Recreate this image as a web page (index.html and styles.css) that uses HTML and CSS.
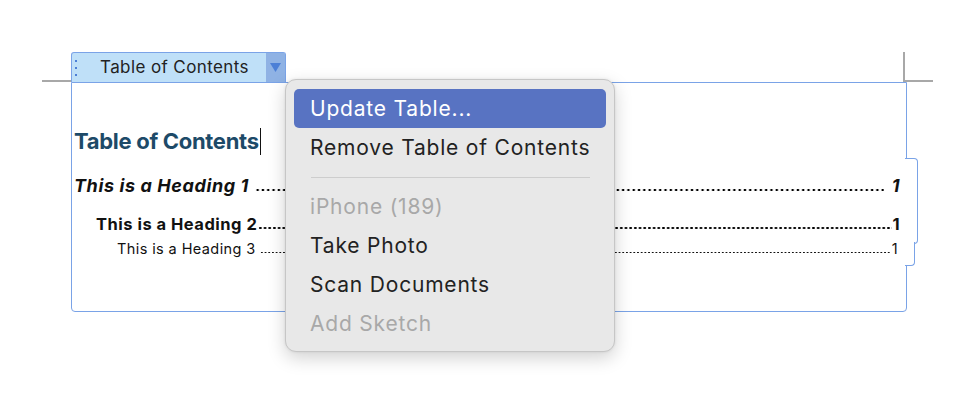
FILE: index.html
```html
<!DOCTYPE html>
<html lang="en">
<head>
    <meta charset="UTF-8">
    <meta name="viewport" content="width=device-width, initial-scale=1.0">
    <title>Table of Contents</title>
    <link rel="stylesheet" href="styles.css">
</head>
<body>
    <div class="page">
        <div class="doc">
            <div class="tab">
                <span class="grip"><i></i><i></i><i></i></span>
                <span class="tab-label">Table of Contents</span>
                <span class="tab-drop"><svg width="11" height="9" viewBox="0 0 11 9"><path d="M0 0 H11 L5.5 9 Z" fill="#4c7fd6"/></svg></span>
            </div>
            <div class="toc-box">
                <div class="bump"></div>
                <div class="bump-low"></div>
                <h2 class="toc-title">Table of Contents<span class="caret"></span></h2>
                <div class="toc-line lvl1"><span class="entry">This is a Heading 1</span><span class="leader"></span><span class="num">1</span></div>
                <div class="toc-line lvl2"><span class="entry">This is a Heading 2</span><span class="leader"></span><span class="num">1</span></div>
                <div class="toc-line lvl3"><span class="entry">This is a Heading 3</span><span class="leader"></span><span class="num">1</span></div>
            </div>
        </div>

        <ul class="menu">
            <li class="item active">Update Table...</li>
            <li class="item">Remove Table of Contents</li>
            <li class="sep"></li>
            <li class="item disabled">iPhone (189)</li>
            <li class="item">Take Photo</li>
            <li class="item">Scan Documents</li>
            <li class="item disabled">Add Sketch</li>
        </ul>
    </div>
</body>
</html>
```

FILE: styles.css
```css
body {
    margin: 0;
    background-color: #fff;
    font-family: Inter, 'Liberation Sans', sans-serif;
}

.page {
    position: relative;
    width: 980px;
    height: 410px;
    overflow: hidden;
}

.doc {
    position: relative;
    width: 836px;
    margin-left: 71px;
    padding-top: 52px;
}

/* page margin corner marks */
.doc::before {
    content: "";
    position: absolute;
    left: -29px;
    top: 80px;
    width: 29px;
    height: 2px;
    background-color: #a8a8a8;
}

.doc::after {
    content: "";
    position: absolute;
    left: 832px;
    top: 52px;
    width: 28px;
    height: 28px;
    border-left: 2px solid #a8a8a8;
    border-bottom: 2px solid #a8a8a8;
}

.tab {
    display: flex;
    align-items: stretch;
    width: 215px;
    height: 30px;
    background-color: #bfe0f8;
    border: 1px solid #7aa3e7;
    border-bottom: none;
    border-radius: 3px 3px 0 0;
    box-sizing: border-box;
}

.grip {
    display: flex;
    flex-direction: column;
    justify-content: center;
    gap: 5px;
    width: 8px;
    padding-left: 3px;
}

.grip i {
    display: block;
    width: 2px;
    height: 2px;
    background-color: #4c7fd6;
}

.tab-label {
    flex: 1;
    padding-left: 17px;
    font-size: 17px;
    letter-spacing: 0.4px;
    line-height: 29px;
    color: #222;
}

.tab-drop {
    display: flex;
    align-items: center;
    justify-content: center;
    width: 19px;
    background-color: #8fb2e4;
}

.toc-box {
    position: relative;
    height: 228px;
    border: 1px solid #7aa3e7;
    border-radius: 0 0 4px 4px;
    padding: 0 0 0 2px;
}

.bump {
    position: absolute;
    right: -12px;
    top: 75px;
    width: 12px;
    height: 84px;
    background-color: #fff;
    border: 1px solid #7aa3e7;
    border-left: none;
    border-radius: 0 4px 4px 0;
}

.bump-low {
    position: absolute;
    right: -9px;
    top: 159px;
    width: 9px;
    height: 23px;
    background-color: #fff;
    border: 1px solid #7aa3e7;
    border-left: none;
    border-top: none;
    border-radius: 0 0 4px 0;
}

.toc-title {
    margin: 44px 0 0;
    font-size: 22px;
    font-weight: 700;
    line-height: 28px;
    color: #1d4a68;
    letter-spacing: -0.3px;
}

.caret {
    display: inline-block;
    width: 1.5px;
    height: 27px;
    margin-left: 1px;
    vertical-align: -6px;
    background-color: #111;
}

.toc-line {
    display: flex;
    align-items: baseline;
    color: #111;
    padding-right: 6px;
}

.leader {
    flex: 1;
    height: 4px;
    margin: 0 2px;
    background-repeat: repeat-x;
}

.lvl1 {
    margin-top: 20px;
    font-size: 18px;
    font-weight: 700;
    font-style: italic;
    letter-spacing: 0.6px;
}

.lvl1 .leader {
    background-image: radial-gradient(circle, #000 1.2px, transparent 1.5px);
    background-size: 5.3px 4px;
    margin: 0 8px 0 6px;
}

.lvl2 {
    margin-top: 18px;
    padding-left: 22px;
    font-size: 16.5px;
    font-weight: 700;
    letter-spacing: 0.5px;
}

.lvl2 .leader {
    background-image: radial-gradient(circle, #000 1px, transparent 1.3px);
    background-size: 4.7px 4px;
    margin: 0 0 0 1px;
}

.lvl3 {
    margin-top: 6px;
    padding-left: 43px;
    padding-right: 8px;
    font-size: 14.5px;
    letter-spacing: 0.4px;
}

.lvl3 .leader {
    background-image: radial-gradient(circle, #111 0.7px, transparent 1px);
    background-size: 3.7px 3px;
    height: 3px;
    margin: 0 1px 0 4px;
}

.menu {
    position: absolute;
    left: 285px;
    top: 79px;
    width: 330px;
    margin: 0;
    padding: 9px 8px 8px;
    box-sizing: border-box;
    list-style: none;
    background-color: #e8e8e8;
    border: 1px solid #c6c6c6;
    border-radius: 11px;
    box-shadow: 0 6px 18px rgba(0, 0, 0, 0.18), 0 0 3px rgba(0, 0, 0, 0.08);
}

.item {
    height: 39px;
    padding-left: 16px;
    border-radius: 5px;
    font-size: 21px;
    letter-spacing: 0.8px;
    line-height: 39px;
    color: #222;
}

.item.active {
    background-color: #5873c2;
    color: #fff;
}

.item.disabled {
    color: #a8a8a8;
}

.sep {
    height: 1px;
    margin: 10px 16px 9px 17px;
    background-color: #cdcdcd;
}
```
